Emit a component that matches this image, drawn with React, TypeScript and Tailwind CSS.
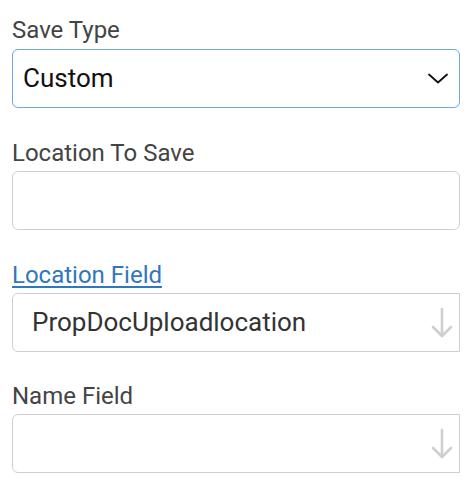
import React from "react";

const Arrow = () => (
  <svg width="22" height="31" viewBox="0 0 22 31" fill="none" stroke="#cfcfcf" strokeWidth="2.6" strokeLinecap="round" strokeLinejoin="round">
    <path d="M11 2 V29" />
    <path d="M2 20 L11 29 L20 20" />
  </svg>
);

export default function App() {
  return (
    <div className="w-[474px] h-[504px] bg-white pl-[12px] pt-[15px]" style={{ fontFamily: "Roboto, 'Liberation Sans', sans-serif" }}>
      <div className="flex flex-col w-[448px]">
        <div className="text-[24px] leading-[30px] text-[#444] mb-[4px]">Save Type</div>
        <div className="h-[59px] rounded-[6px] border-[1.5px] border-[#6fa6dc] flex items-center justify-between pl-[10px] pr-[11px]">
          <span className="text-[26px] text-[#111]">Custom</span>
          <svg width="20" height="11" viewBox="0 0 20 11" fill="none" stroke="#111" strokeWidth="1.8" strokeLinecap="round" strokeLinejoin="round">
            <path d="M1 1.5 L10 9.5 L19 1.5" />
          </svg>
        </div>

        <div className="text-[24px] leading-[30px] text-[#444] mt-[30px] mb-[3px]">Location To Save</div>
        <div className="h-[59px] rounded-[6px] border-[1.5px] border-[#cfcfcf]" />

        <div className="text-[24px] leading-[30px] text-[#2f78bd] underline underline-offset-[3px] mt-[30px] mb-[3px]">Location Field</div>
        <div className="h-[59px] rounded-l-[6px] border-[1.5px] border-[#cfcfcf] flex items-center justify-between pl-[19px] pr-[6px]">
          <span className="text-[26px] text-[#333]">PropDocUploadlocation</span>
          <Arrow />
        </div>

        <div className="text-[24px] leading-[30px] text-[#444] mt-[29px] mb-[3px]">Name Field</div>
        <div className="h-[59px] rounded-l-[6px] border-[1.5px] border-[#cfcfcf] flex items-center justify-end pr-[6px]">
          <Arrow />
        </div>
      </div>
    </div>
  );
}
